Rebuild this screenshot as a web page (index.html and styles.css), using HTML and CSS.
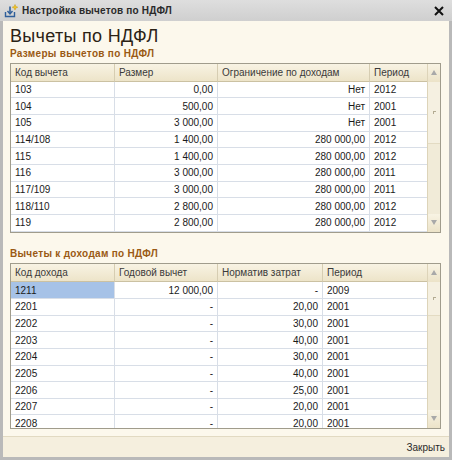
FILE: index.html
```html
<!DOCTYPE html>
<html lang="ru">
<head>
    <meta charset="UTF-8">
    <title>Настройка вычетов по НДФЛ</title>
    <link rel="stylesheet" href="styles.css">
</head>
<body>
    <div class="window">
        <div class="titlebar">
            <svg class="app-icon" width="14" height="14" viewBox="0 0 14 14">
                <path d="M1.5 8 V12.5 H10.5 V8" fill="none" stroke="#2f5f9a" stroke-width="1.4"/>
                <path d="M6 2.5 V9" stroke="#2f5f9a" stroke-width="1.6"/>
                <path d="M3.5 7 L6 10 L8.5 7" fill="none" stroke="#2f5f9a" stroke-width="1.4"/>
                <path d="M11 0.5 L11.8 2.5 L13.8 3.2 L11.8 4 L11 6 L10.2 4 L8.2 3.2 L10.2 2.5 Z" fill="#f3c623" stroke="#c99a10" stroke-width="0.5"/>
            </svg>
            <span class="title">Настройка вычетов по НДФЛ</span>
            <svg class="close" width="10" height="10" viewBox="0 0 10 10">
                <path d="M1 1 L9 9 M9 1 L1 9" stroke="#111" stroke-width="2"/>
            </svg>
        </div>

        <div class="content">
            <h1>Вычеты по НДФЛ</h1>

            <!-- Размеры вычетов -->
            <div class="group-title">Размеры вычетов по НДФЛ</div>
            <div class="grid">
                <div class="grid-table">
                    <table>
                        <colgroup>
                            <col class="w104">
                            <col class="w103">
                            <col class="w152">
                            <col class="w57">
                        </colgroup>
                        <thead>
                            <tr><th>Код вычета</th><th>Размер</th><th>Ограничение по доходам</th><th>Период</th></tr>
                        </thead>
                        <tbody>
                            <tr><td>103</td><td class="num">0,00</td><td class="num">Нет</td><td>2012</td></tr>
                            <tr><td>104</td><td class="num">500,00</td><td class="num">Нет</td><td>2001</td></tr>
                            <tr><td>105</td><td class="num">3 000,00</td><td class="num">Нет</td><td>2001</td></tr>
                            <tr><td>114/108</td><td class="num">1 400,00</td><td class="num">280 000,00</td><td>2012</td></tr>
                            <tr><td>115</td><td class="num">1 400,00</td><td class="num">280 000,00</td><td>2012</td></tr>
                            <tr><td>116</td><td class="num">3 000,00</td><td class="num">280 000,00</td><td>2011</td></tr>
                            <tr><td>117/109</td><td class="num">3 000,00</td><td class="num">280 000,00</td><td>2011</td></tr>
                            <tr><td>118/110</td><td class="num">2 800,00</td><td class="num">280 000,00</td><td>2012</td></tr>
                            <tr><td>119</td><td class="num">2 800,00</td><td class="num">280 000,00</td><td>2012</td></tr>
                        </tbody>
                    </table>
                </div>
                <div class="scrollbar">
                    <div class="sb-btn"><span class="arrow-up"></span></div>
                    <div class="sb-track">
                        <div class="sb-thumb thumb1"><span class="grip"></span></div>
                    </div>
                    <div class="sb-btn"><span class="arrow-down"></span></div>
                </div>
            </div>

            <!-- Вычеты к доходам -->
            <div class="group-title second">Вычеты к доходам по НДФЛ</div>
            <div class="grid">
                <div class="grid-table clipped">
                    <table>
                        <colgroup>
                            <col class="w104">
                            <col class="w103">
                            <col class="w105">
                            <col class="w104">
                        </colgroup>
                        <thead>
                            <tr class="tall"><th>Код дохода</th><th>Годовой вычет</th><th>Норматив затрат</th><th>Период</th></tr>
                        </thead>
                        <tbody>
                            <tr><td class="current">1211</td><td class="num">12 000,00</td><td class="num">-</td><td>2009</td></tr>
                            <tr><td>2201</td><td class="num">-</td><td class="num">20,00</td><td>2001</td></tr>
                            <tr><td>2202</td><td class="num">-</td><td class="num">30,00</td><td>2001</td></tr>
                            <tr><td>2203</td><td class="num">-</td><td class="num">40,00</td><td>2001</td></tr>
                            <tr><td>2204</td><td class="num">-</td><td class="num">30,00</td><td>2001</td></tr>
                            <tr><td>2205</td><td class="num">-</td><td class="num">40,00</td><td>2001</td></tr>
                            <tr><td>2206</td><td class="num">-</td><td class="num">25,00</td><td>2001</td></tr>
                            <tr><td>2207</td><td class="num">-</td><td class="num">20,00</td><td>2001</td></tr>
                            <tr><td>2208</td><td class="num">-</td><td class="num">20,00</td><td>2001</td></tr>
                        </tbody>
                    </table>
                </div>
                <div class="scrollbar">
                    <div class="sb-btn tall"><span class="arrow-up"></span></div>
                    <div class="sb-track">
                        <div class="sb-thumb thumb2"><span class="grip"></span></div>
                    </div>
                    <div class="sb-btn"><span class="arrow-down"></span></div>
                </div>
            </div>
        </div>

        <div class="footer">
            <span class="close-link">Закрыть</span>
        </div>
    </div>
</body>
</html>
```

FILE: styles.css
```css
* {
    box-sizing: border-box;
}

body {
    margin: 0;
    padding: 0;
    font-family: "Liberation Sans", Arial, sans-serif;
    font-size: 10px;
    color: #1a1a1a;
    background-color: #b8b8b8;
}

.window {
    width: 452px;
    height: 460px;
    display: flex;
    flex-direction: column;
    background-color: #fcf8ec;
    border: 3px solid #b9b9b9;
    border-top: none;
}

.titlebar {
    height: 21px;
    margin: 0 -3px;
    padding: 0 8px 0 4px;
    display: flex;
    align-items: center;
    background: linear-gradient(#dedede, #cfcfcf);
}

.app-icon {
    margin-right: 4px;
}

.title {
    flex: 1;
    font-weight: bold;
    color: #2a2a2a;
    letter-spacing: 0.2px;
}

.close {
    margin-top: 1px;
}

.content {
    flex: 1;
    padding: 5px 8px 0 7px;
}

h1 {
    margin: 0;
    font-size: 18px;
    line-height: 21px;
    font-weight: normal;
    color: #2b2215;
    letter-spacing: 0.3px;
}

.group-title {
    margin: 1px 0 3px;
    line-height: 12px;
    font-weight: bold;
    color: #9a5a14;
    letter-spacing: 0.3px;
}

.group-title.second {
    margin: 15px 0 3px;
}

.grid {
    display: flex;
    border: 1px solid #a09c8c;
    background-color: #fff;
}

.grid-table {
    width: 416px;
}

.grid-table.clipped {
    height: 164px;
    overflow: hidden;
}

table {
    width: 416px;
    table-layout: fixed;
    border-collapse: separate;
    border-spacing: 0;
}

.w57 { width: 57px; }
.w103 { width: 103px; }
.w104 { width: 104px; }
.w105 { width: 105px; }
.w152 { width: 152px; }

th {
    height: 17.67px;
    padding: 1.5px 4px 0;
    line-height: 14px;
    vertical-align: top;
    text-align: left;
    font-weight: normal;
    color: #3a3a3a;
    background: linear-gradient(#f8f3e3, #ede4c9);
    border-right: 1px solid #d6cdb2;
    border-bottom: 1px solid #cbc1a2;
    white-space: nowrap;
    overflow: hidden;
}

tr.tall th {
    height: 18.67px;
    padding-top: 2px;
}

td {
    height: 16.67px;
    padding: 1.5px 4px 0;
    line-height: 14px;
    vertical-align: top;
    border-right: 1px solid #d8dee7;
    border-bottom: 1px solid #d8dee7;
    white-space: nowrap;
    overflow: hidden;
}

th:last-child,
td:last-child {
    border-right: none;
}

td.num {
    text-align: right;
}

td.current {
    background-color: #a6c2e7;
}

.scrollbar {
    width: 13px;
    display: flex;
    flex-direction: column;
    background-color: #f1ebd8;
    border-left: 1px solid #ddd4b9;
}

.sb-btn {
    height: 17.67px;
    display: flex;
    align-items: center;
    justify-content: center;
    background: linear-gradient(#f8f3e3, #ece3c8);
}

.sb-btn.tall {
    height: 18.67px;
}

.sb-track {
    flex: 1;
}

.sb-thumb {
    display: flex;
    align-items: center;
    justify-content: center;
    background-color: #f5f0e1;
    border-bottom: 1px solid #e3dbc3;
}

.thumb1 {
    height: 62px;
}

.thumb2 {
    height: 34px;
}

.grip {
    width: 3px;
    height: 3px;
    border-top: 1px solid #b3ab92;
    border-left: 1px solid #b3ab92;
}

.arrow-up {
    width: 0;
    height: 0;
    border-left: 3.5px solid transparent;
    border-right: 3.5px solid transparent;
    border-bottom: 5px solid #a9a9a9;
}

.arrow-down {
    width: 0;
    height: 0;
    border-left: 3.5px solid transparent;
    border-right: 3.5px solid transparent;
    border-top: 5px solid #a9a9a9;
}

.footer {
    height: 21px;
    display: flex;
    align-items: center;
    justify-content: flex-end;
    padding: 1px 4px 0 0;
    background-color: #f5efde;
    border-top: 1px solid #e2dac2;
}

.close-link {
    color: #2a2a2a;
}
```
